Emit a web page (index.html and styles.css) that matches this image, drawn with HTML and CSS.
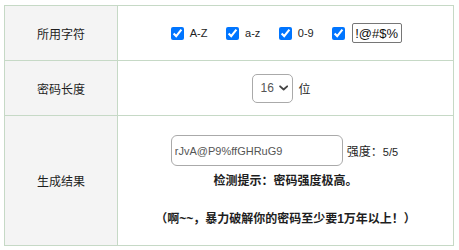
FILE: index.html
```html
<!DOCTYPE html>
<html lang="zh-CN">
<head>
<meta charset="utf-8">
<title>密码生成器</title>
<link rel="stylesheet" href="styles.css">
</head>
<body>
<table class="gen">
  <tr class="r1">
    <th>所用字符</th>
    <td>
      <div class="chars">
        <label class="opt"><input type="checkbox" checked><span class="lat">A-Z</span></label>
        <label class="opt"><input type="checkbox" checked><span class="lat">a-z</span></label>
        <label class="opt"><input type="checkbox" checked><span class="lat">0-9</span></label>
        <label class="opt sym-opt"><input type="checkbox" checked><input class="sym" type="text" value="!@#$%"></label>
      </div>
    </td>
  </tr>
  <tr class="r2">
    <th>密码长度</th>
    <td>
      <div class="len">
        <div class="sel">
          <select><option>8</option><option>12</option><option selected>16</option><option>20</option></select>
          <svg class="chev" width="10" height="6" viewBox="0 0 10 6"><path d="M1.2 1.2 L5 4.6 L8.8 1.2" fill="none" stroke="#444" stroke-width="2" stroke-linecap="round" stroke-linejoin="round"/></svg>
        </div>
        <span>位</span>
      </div>
    </td>
  </tr>
  <tr class="r3">
    <th>生成结果</th>
    <td class="res">
      <div class="out">
        <input class="pwd" type="text" value="rJvA@P9%ffGHRuG9">
        <span class="str">强度：<span class="lat">5/5</span></span>
      </div>
      <p class="tip first">检测提示：密码强度极高。</p>
      <p class="tip">（啊~~，暴力破解你的密码至少要1万年以上！）</p>
    </td>
  </tr>
</table>
</body>
</html>
```

FILE: styles.css
```css
body {
  margin: 0;
  font-family: "Liberation Sans", "Noto Sans CJK SC", sans-serif;
  font-size: 12px;
  color: #1e1e1e;
  background: #fff;
}

.gen {
  margin: 5px 0 0 4px;
  border-collapse: collapse;
  width: 450px;
  table-layout: fixed;
}

.gen th,
.gen td {
  border: 1px solid #c6d9c6;
  padding: 0;
}

.gen th {
  width: 112px;
  background: #f4f4f4;
  font-weight: normal;
  text-align: center;
}

.r1,
.r2 {
  height: 55px;
}

.r3 {
  height: 130px;
}

.lat {
  font-size: 11px;
}

.chars {
  display: flex;
  align-items: center;
  justify-content: center;
  gap: 18.5px;
  padding-left: 2px;
}

.opt {
  display: flex;
  align-items: center;
  gap: 6px;
}

.opt input[type="checkbox"] {
  margin: 0;
  width: 13px;
  height: 13px;
}

.sym-opt {
  gap: 7px;
}

.sym {
  box-sizing: border-box;
  width: 50px;
  height: 20px;
  margin: 0;
  padding: 0 2px;
  border: 1px solid #767676;
  border-radius: 2px;
  font-family: "Liberation Sans", sans-serif;
  font-size: 13px;
  color: #111;
}

.len {
  display: flex;
  align-items: center;
  justify-content: center;
  gap: 5px;
  margin-right: 8px;
}

.sel {
  box-sizing: border-box;
  width: 41px;
  height: 29px;
  border: 1px solid #aaa;
  border-radius: 5px;
  display: flex;
  align-items: center;
  padding: 0 4px 0 7px;
}

.sel select {
  appearance: none;
  -webkit-appearance: none;
  border: none;
  background: transparent;
  padding: 0;
  margin: 0;
  width: 18px;
  font-family: "Liberation Sans", sans-serif;
  font-size: 12px;
  color: #555;
  outline: none;
}

.chev {
  display: block;
  margin-left: 2px;
}

.res {
  vertical-align: top;
  padding-top: 19px !important;
}

.out {
  display: flex;
  align-items: center;
  justify-content: center;
  gap: 4px;
  padding-right: 2px;
}

.pwd {
  box-sizing: border-box;
  width: 172px;
  height: 31px;
  margin: 0;
  padding: 0 2px 0 3px;
  border: 1px solid #aaa;
  border-radius: 6px;
  font-family: "Liberation Sans", sans-serif;
  font-size: 11px;
  color: #555;
}

.str {
  white-space: nowrap;
  flex: none;
}

.tip {
  margin: 20px 0 0;
  line-height: 18px;
  font-weight: bold;
  text-align: center;
}

.tip.first {
  margin-top: 6px;
}
```
